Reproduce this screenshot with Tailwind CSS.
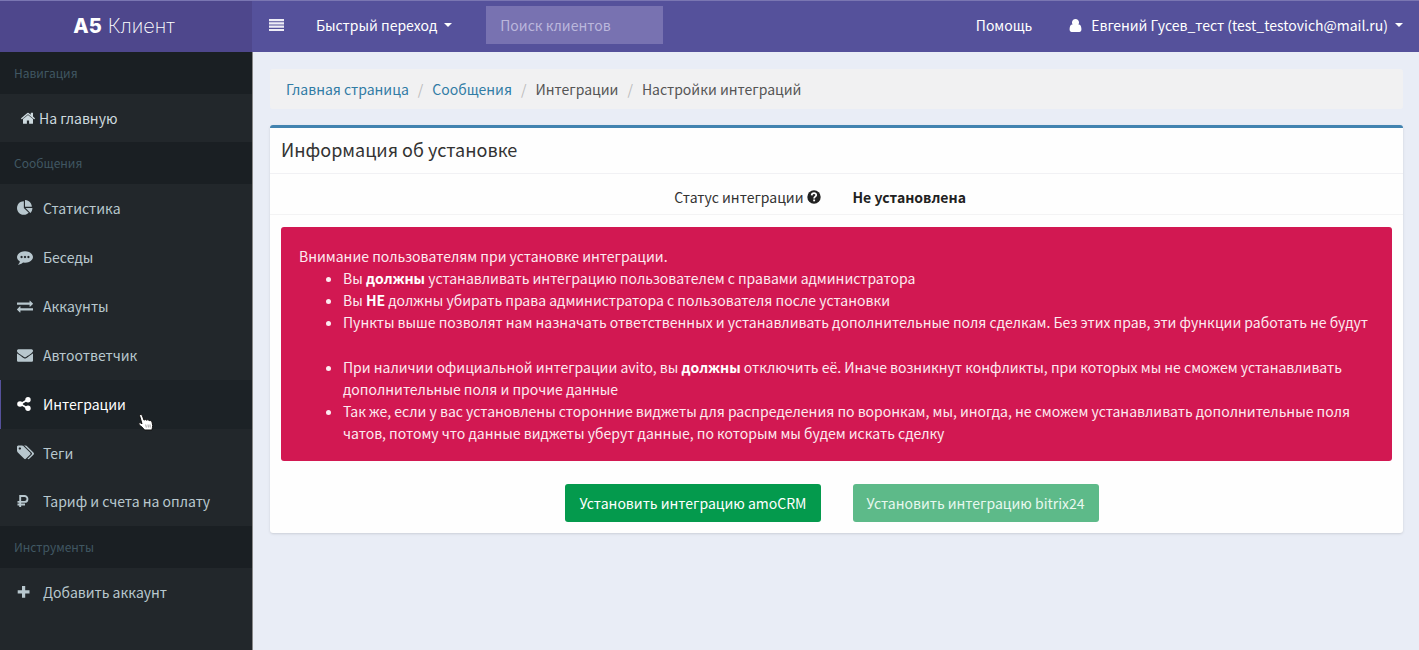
<!DOCTYPE html>
<html lang="ru">
<head>
<meta charset="utf-8">
<title>A5 Клиент</title>
<script src="https://cdn.jsdelivr.net/npm/@tailwindcss/browser@4"></script>
</head>
<body class="flex min-h-screen flex-col bg-[#e9edf6] font-['Noto_Sans_CJK_SC','Noto_Sans',sans-serif] text-[14px] leading-[22px] text-[#333] font-normal">
<header class="flex h-[52px] border-t border-[#7a76b2] text-white">
  <a href="#" class="flex w-[252px] shrink-0 items-center justify-center gap-[6px] bg-[#4e478c] pb-[2px] pr-1 font-['Inter',sans-serif] text-[20px]"><b class="font-extrabold">A5</b><span class="font-extralight">Клиент</span></a>
  <nav class="flex flex-1 items-center bg-[#55519b] pb-[3px] pl-[17px] pr-4">
    <button aria-label="Меню" class="mr-8"><svg class="h-[14px] w-[15px]" viewBox="0 0 15 14" fill="#eeedf6"><path d="M0 1h15v2.200H0zM0 4.300h15v2.200H0zM0 7.600h15v2.200H0zM0 10.900h15v2.200H0z"/></svg></button>
    <button class="flex items-center gap-[7px]">Быстрый переход <span class="border-x-4 border-t-4 border-x-transparent border-t-white"></span></button>
    <input type="text" aria-label="Поиск клиентов" placeholder="Поиск клиентов" class="ml-[34px] h-[38px] w-[177px] bg-[#7872b1] px-[14px] text-white outline-none placeholder:text-[#bbb7dc]">
    <a href="#" class="ml-auto">Помощь</a>
    <button class="ml-[37px] flex items-center"><svg class="mr-[9px] h-[13px] w-[13px]" viewBox="192 256 1408 1408" preserveAspectRatio="none" fill="#fff"><path d="M1536 1399q0 109-62.500 187t-150.500 78h-854q-88 0-150.500-78t-62.500-187q0-85 8.500-160.500t31.500-152 58.500-131 94-89 134.500-34.500q131 128 313 128t313-128q76 0 134.500 34.500t94 89 58.500 131 31.500 152 8.500 160.500zm-256-759q0 159-112.500 271.500t-271.500 112.500-271.500-112.500-112.500-271.500 112.500-271.500 271.500-112.500 271.500 112.500 112.500 271.500z"/></svg>Евгений Гусев_тест (test_testovich@mail.ru)<span class="ml-[7px] border-x-4 border-t-4 border-x-transparent border-t-white"></span></button>
  </nav>
</header>
<div class="flex flex-1">
  <aside class="w-[253px] shrink-0 border-r border-[#888] bg-[#22272b] text-[#b8c7ce]">
    <h2 class="flex h-[42px] items-center bg-[#1a1f23] px-[14px] text-[12px] font-normal text-[#405762]">Навигация</h2>
    <a href="#" class="flex h-12 items-center gap-1 pl-[21px] text-[#cdd9de]"><svg class="h-[14px] w-[14px]" viewBox="90 160 1612 1400" fill="currentColor"><path d="M1472 992v480q0 26-19 45t-45 19h-384v-384h-256v384h-384q-26 0-45-19t-19-45v-480q0-1 .5-3t.5-3l575-474 575 474q1 2 1 6zm223-69l-62 74q-8 9-21 11h-3q-13 0-21-7l-692-577-692 577q-12 8-24 7-13-2-21-11l-62-74q-8-10-7-23.500t11-21.500l719-599q32-26 76-26t76 26l244 204v-195q0-14 9-23t23-9h192q14 0 23 9t9 23v408l219 182q10 8 11 21.500t-7 23.500z"/></svg>На главную</a>
    <h2 class="flex h-[42px] items-center bg-[#1a1f23] px-[14px] text-[12px] font-normal text-[#405762]">Сообщения</h2>
    <a href="#" class="flex h-[49px] items-center pb-[2px] pl-[17px]"><svg class="mr-[10px] h-4 w-4" viewBox="0 0 1792 1792" fill="currentColor"><path d="M768 890l546 546q-106 108-247.500 168t-298.500 60q-209 0-385.500-103t-279.500-279.500-103-385.500 103-385.500 279.500-279.500 385.500-103v762zm187 6h773q0 157-60 298.500t-168 247.500zm709-128h-768v-768q209 0 385.500 103t279.500 279.500 103 385.500z"/></svg>Статистика</a>
    <a href="#" class="flex h-[49px] items-center pb-[2px] pl-[17px]"><svg class="mr-[10px] h-4 w-4" viewBox="0 0 1792 1792" fill="currentColor"><path d="M640 896q0-53-37.500-90.500t-90.500-37.500-90.500 37.500-37.500 90.500 37.500 90.500 90.500 37.500 90.500-37.500 37.500-90.500zm384 0q0-53-37.500-90.500t-90.500-37.500-90.500 37.500-37.500 90.500 37.500 90.500 90.500 37.500 90.500-37.500 37.500-90.500zm384 0q0-53-37.500-90.500t-90.500-37.500-90.500 37.500-37.500 90.500 37.500 90.500 90.500 37.500 90.500-37.500 37.500-90.500zm384 0q0 174-120 321.500t-326 233-450 85.500q-110 0-211-18-173 173-435 229-52 10-86 13-12 1-22-6t-13-18q-4-15 20-37 5-5 23.500-21.500t25.500-23.500 23.500-25.500 24-31.500 20.500-37 20-48 14.500-57.500 12.500-72.500q-146-90-229.500-216.500t-83.500-269.500q0-174 120-321.500t326-233 450-85.500 450 85.500 326 233 120 321.500z"/></svg>Беседы</a>
    <a href="#" class="flex h-[49px] items-center pb-[2px] pl-[17px]"><svg class="mr-[10px] h-4 w-4" viewBox="0 0 1792 1792" fill="currentColor"><path d="M1792 1184v192q0 13-9.500 22.500t-22.500 9.500h-1376v192q0 13-9.500 22.500t-22.500 9.500q-12 0-24-10l-319-320q-9-9-9-22 0-14 9-23l320-320q9-9 23-9 13 0 22.500 9.500t9.500 22.500v192h1376q13 0 22.500 9.500t9.500 22.500zm0-544q0 14-9 23l-320 320q-9 9-23 9-13 0-22.500-9.500t-9.500-22.500v-192h-1376q-13 0-22.500-9.500t-9.500-22.500v-192q0-13 9.500-22.500t22.500-9.500h1376v-192q0-14 9-23t23-9q12 0 24 10l319 319q9 9 9 23z"/></svg>Аккаунты</a>
    <a href="#" class="flex h-[49px] items-center pb-[2px] pl-[17px]"><svg class="mr-[10px] h-4 w-4" viewBox="0 0 1792 1792" fill="currentColor"><path d="M1792 710v794q0 66-47 113t-113 47h-1472q-66 0-113-47t-47-113v-794q44 49 101 87 362 246 497 345 57 42 92.500 65.500t94.500 48 110 24.500h2q51 0 110-24.500t94.500-48 92.500-65.500q170-123 498-345 57-39 100-87zm0-294q0 79-49 151t-122 123q-376 261-468 325-10 7-42.500 31t-54 38.500-52 32.500-57.500 27-50 9h-2q-23 0-50-9t-57.500-27-52-32.500-54-38.500-42.500-31q-91-64-262-182.500t-205-142.500q-62-42-117-115.500t-55-136.500q0-78 41.500-130t118.500-52h1472q65 0 112.500 47t47.500 113z"/></svg>Автоответчик</a>
    <a href="#" aria-current="page" class="relative flex h-[49px] items-center border-l border-[#55519b] bg-[#1c2226] pb-[2px] pl-4 text-white"><svg class="mr-[10px] h-4 w-4" viewBox="0 0 16 16" fill="currentColor"><path d="M11 3.500L3.500 8l7.500 4.500" fill="none" stroke="currentColor" stroke-width="1.700"/><circle cx="3" cy="8" r="2.800"/><circle cx="11" cy="3.800" r="2.700"/><circle cx="11" cy="12.200" r="2.700"/></svg>Интеграции
      <svg class="absolute left-[136px] top-[33px] h-[19px] w-[18px]" viewBox="0 0 18 19" fill="#fff" stroke="#111" stroke-width="1" stroke-linejoin="round"><path d="M2.500 2.500C3 1 5 1.300 5.400 2.700L7 7.200C7.800 6.300 9 6.400 9.600 7.200 10.500 6.500 11.700 6.700 12.200 7.700 13.200 7.200 14.700 7.700 15 9L15.700 12.500C15.800 14 15 15.200 15 17H7.500C6.500 15 4 13.500 2 11.500 1.200 10.200 2.600 9.400 3.700 10L5 10.800z"/><path d="M8.700 11.500l.6 3M11 11.500l.4 3M13 11.500l.2 3" stroke="#777" stroke-width=".7"/></svg></a>
    <a href="#" class="flex h-[49px] items-center pb-[2px] pl-[17px]"><svg class="mr-[9px] h-[15px] w-[17px]" viewBox="0 64 1899 1664" fill="currentColor"><path d="M448 448q0-53-37.500-90.500t-90.500-37.500-90.500 37.500-37.500 90.500 37.500 90.500 90.500 37.500 90.500-37.500 37.500-90.500zm1067 576q0 53-37 90l-491 492q-39 37-91 37-53 0-90-37l-715-716q-38-37-64.500-101t-26.500-117v-416q0-52 38-90t90-38h416q53 0 117 26.500t102 64.500l715 714q37 39 37 91zm384 0q0 53-37 90l-491 492q-39 37-91 37-36 0-59-14t-53-45l470-470q37-37 37-90 0-52-37-91l-715-714q-38-38-102-64.500t-117-26.500h224q53 0 117 26.500t102 64.500l715 714q37 39 37 91z"/></svg>Теги</a>
    <a href="#" class="flex h-12 items-center pb-[2px] pl-[17px]"><svg class="mr-[10px] h-4 w-4" viewBox="0 0 16 16" fill="none" stroke="currentColor" stroke-width="1.900"><path d="M3.200 14V3H7.500a2.900 2.900 0 0 1 0 5.900H.5M.5 11.500H8"/></svg>Тариф и счета на оплату</a>
    <h2 class="flex h-[42px] items-center bg-[#1a1f23] px-[14px] text-[12px] font-normal text-[#405762]">Инструменты</h2>
    <a href="#" class="flex h-12 items-center pl-[17px]"><svg class="mr-[10px] h-4 w-4" viewBox="0 0 16 16" fill="currentColor"><path d="M5 2h3.200v4.300h4.300v3.200H8.200v4.300H5V9.500H.7V6.300H5z"/></svg>Добавить аккаунт</a>
  </aside>
  <main class="min-w-0 flex-1 pl-[17px] pr-4 pt-[17px]">
    <ol class="flex h-10 items-center rounded-[3px] bg-[#f1f1f2] px-4 text-[#555]">
      <li><a href="#" class="text-[#317ca5]">Главная страница</a></li>
      <li class="flex before:px-[9px] before:text-[#bbb] before:content-['/']"><a href="#" class="text-[#317ca5]">Сообщения</a></li>
      <li class="flex before:px-[9px] before:text-[#bbb] before:content-['/']">Интеграции</li>
      <li class="flex before:px-[9px] before:text-[#bbb] before:content-['/']">Настройки интеграций</li>
    </ol>
    <section class="mt-4 rounded-[3px] border-t-[3px] border-[#4283b0] bg-[#fefefe] shadow-sm">
      <h1 class="flex h-[46px] items-center border-b border-[#f1f1f4] px-[11px] pb-1 text-[18px] font-normal text-[#333]">Информация об установке</h1>
      <div class="grid h-[41px] grid-cols-2 items-center border-b border-[#f3f3f4] pt-[5px]">
        <div class="flex items-center justify-end gap-[3px] px-4">Статус интеграции <svg class="h-[14px] w-[14px]" viewBox="0 0 14 14"><circle cx="7" cy="7" r="6.700" fill="#222"/><path d="M4.700 5.400C4.800 2.400 9.400 2.500 9.200 5.200 9.100 6.600 7.100 6.700 7.100 8.400" fill="none" stroke="#fff" stroke-width="1.800"/><path d="M6.200 9.500h1.900v1.800H6.200z" fill="#fff"/></svg></div>
        <strong class="px-4 font-bold text-[#222]">Не установлена</strong>
      </div>
      <div class="mx-[11px] mt-3 rounded-[3px] bg-[#d21852] pb-[17px] pl-[18px] pr-4 pt-[18px] text-[#fdeaf0]">
        <p>Внимание пользователям при установке интеграции.</p>
        <ul class="list-disc pl-11">
          <li>Вы <b class="text-white">должны</b> устанавливать интеграцию пользователем с правами администратора</li>
          <li>Вы <b class="text-white">НЕ</b> должны убирать права администратора с пользователя после установки</li>
          <li class="mb-[23px]">Пункты выше позволят нам назначать ответственных и устанавливать дополнительные поля сделкам. Без этих прав, эти функции работать не будут</li>
          <li>При наличии официальной интеграции avito, вы <b class="text-white">должны</b> отключить её. Иначе возникнут конфликты, при которых мы не сможем устанавливать дополнительные поля и прочие данные</li>
          <li>Так же, если у вас установлены сторонние виджеты для распределения по воронкам, мы, иногда, не сможем устанавливать дополнительные поля чатов, потому что данные виджеты уберут данные, по которым мы будем искать сделку</li>
        </ul>
      </div>
      <div class="grid grid-cols-2 pb-[11px] pt-[23px]">
        <div class="flex justify-end px-4"><button class="h-[38px] rounded-[3px] bg-[#049a4d] px-[14px] text-white">Установить интеграцию amoCRM</button></div>
        <div class="px-4"><button class="h-[38px] rounded-[3px] bg-[#5dba89] px-[14px] text-[#e8f8ef]">Установить интеграцию bitrix24</button></div>
      </div>
    </section>
  </main>
</div>
</body>
</html>
